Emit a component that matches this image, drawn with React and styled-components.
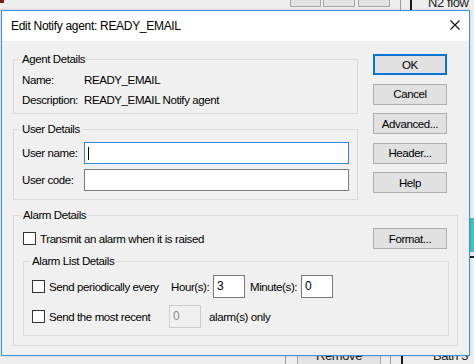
import styled, { createGlobalStyle } from "styled-components";

const GlobalStyle = createGlobalStyle`
  html, body {
    margin: 0;
    padding: 0;
  }
  body {
    background: #f0f0f0;
    font-family: "Liberation Sans", Arial, sans-serif;
    color: #000;
  }
`;

function App() {
  return (
    <Desktop>
      <GlobalStyle />
      <BackSquare />
      <BackButton $left={290} $width={31} />
      <BackButton $left={323} $width={32} />
      <BackButton $left={358} $width={32} />
      <BackLine $left={400} $color="#9a9a9a" />
      <BackLine $left={410} $color="#1a1a1a" $width={2} />
      <BackText $left={428} $top={-5}>N2 flow</BackText>
      <BackPatch />
      <BackDash />
      <BackLine $left={285} $top={356} $color="#9a9a9a" />
      <BackButton $left={297} $width={84} $top={346}>Remove</BackButton>
      <BackLine $left={390} $top={356} $color="#9a9a9a" />
      <BackLine $left={401} $top={356} $color="#1a1a1a" $width={2} />
      <BackText $left={433} $top={348}>Bath 3</BackText>

      <Dialog>
        <TitleBar>
          <Title>Edit Notify agent: READY_EMAIL</Title>
          <CloseIcon width="10" height="10" viewBox="0 0 10 10">
            <path d="M0.5 0.5 L9.5 9.5 M9.5 0.5 L0.5 9.5" stroke="#111" strokeWidth="1.1" />
          </CloseIcon>
        </TitleBar>

        <Body>
          <TopSection>
            <LeftCol>
              <Group $pad="4px 8px 3px">
                <Legend>Agent Details</Legend>
                <InfoRow>
                  <span>Name:</span>
                  <span>READY_EMAIL</span>
                </InfoRow>
                <InfoRow>
                  <span>Description:</span>
                  <span>READY_EMAIL Notify agent</span>
                </InfoRow>
              </Group>

              <Group $pad="6px 8px 8px">
                <Legend>User Details</Legend>
                <Fields>
                  <InfoRow $tall>
                    <span>User name:</span>
                    <TextBox $focused>
                      <Caret />
                    </TextBox>
                  </InfoRow>
                  <InfoRow $tall>
                    <span>User code:</span>
                    <TextBox />
                  </InfoRow>
                </Fields>
              </Group>
            </LeftCol>

            <ButtonCol>
              <Button $default>OK</Button>
              <Button>Cancel</Button>
              <Button>Advanced...</Button>
              <Button>Header...</Button>
              <Button>Help</Button>
            </ButtonCol>
          </TopSection>

          <Group $pad="6px 10px 9px 9px">
            <Legend>Alarm Details</Legend>
            <AlarmStack>
              <AlarmTop>
                <CheckLabel>
                  <Check />
                  Transmit an alarm when it is raised
                </CheckLabel>
                <Button>Format...</Button>
              </AlarmTop>

              <Group $pad="7px 8px 7px" $inner>
                <Legend>Alarm List Details</Legend>
                <ListRows>
                  <ListRow>
                    <CheckLabel $width={137}>
                      <Check />
                      Send periodically every
                    </CheckLabel>
                    <Caption $width={42} $gap={2}>Hour(s):</Caption>
                    <SmallBox>3</SmallBox>
                    <Caption $width={51} $gap={5}>Minute(s):</Caption>
                    <SmallBox>0</SmallBox>
                  </ListRow>
                  <ListRow>
                    <CheckLabel $width={137}>
                      <Check />
                      Send the most recent
                    </CheckLabel>
                    <SmallBox $disabled>0</SmallBox>
                    <Caption $gap={8}>alarm(s) only</Caption>
                  </ListRow>
                </ListRows>
              </Group>
            </AlarmStack>
          </Group>
        </Body>
      </Dialog>
    </Desktop>
  );
}

const Desktop = styled.div`
  position: relative;
  width: 474px;
  height: 364px;
  overflow: hidden;
  background: #eeeeee;
  font-size: 11.5px;
  letter-spacing: -0.4px;
`;

const BackSquare = styled.div`
  position: absolute;
  left: 0;
  top: 0;
  width: 4px;
  height: 3px;
  background: #7a1c1c;
`;

const BackButton = styled.div`
  position: absolute;
  left: ${(p) => p.$left}px;
  top: ${(p) => p.$top ?? -12}px;
  width: ${(p) => p.$width}px;
  height: 19px;
  box-sizing: border-box;
  border: 1px solid #a8a8a8;
  background: #e3e3e3;
  display: flex;
  justify-content: center;
  align-items: center;
  font-size: 13px;
  color: #222;
`;

const BackLine = styled.div`
  position: absolute;
  left: ${(p) => p.$left}px;
  top: ${(p) => p.$top ?? 0}px;
  width: ${(p) => p.$width ?? 1}px;
  height: 10px;
  background: ${(p) => p.$color};
`;

const BackText = styled.div`
  position: absolute;
  left: ${(p) => p.$left}px;
  top: ${(p) => p.$top}px;
  font-size: 13px;
  line-height: 16px;
  color: #222;
`;

const BackPatch = styled.div`
  position: absolute;
  left: 469px;
  top: 218px;
  width: 5px;
  height: 34px;
  background: #3fc4c6;
`;

const BackDash = styled.div`
  position: absolute;
  left: 469px;
  top: 256px;
  width: 5px;
  height: 2px;
  background: #222;
`;

const Dialog = styled.div`
  position: absolute;
  left: 1px;
  top: 10px;
  width: 469px;
  height: 346px;
  box-sizing: border-box;
  border: 1px solid #3a8fdf;
  background: #f0f0f0;
  display: flex;
  flex-direction: column;
  box-shadow: 0 0 3px rgba(0, 0, 0, 0.15);
`;

const TitleBar = styled.div`
  height: 29px;
  flex-shrink: 0;
  background: #fff;
  display: flex;
  align-items: center;
  justify-content: space-between;
  padding: 0 9px 1px 9px;
`;

const Title = styled.div`
  font-size: 12px;
  letter-spacing: -0.3px;
  color: #000;
`;

const CloseIcon = styled.svg`
  display: block;
  margin-bottom: 2px;
`;

const Body = styled.div`
  flex: 1;
  display: flex;
  flex-direction: column;
  gap: 8px;
  padding: 11px 11px 10px;
`;

const TopSection = styled.div`
  display: flex;
  align-items: flex-start;
  gap: 15px;
`;

const LeftCol = styled.div`
  width: 345px;
  display: flex;
  flex-direction: column;
  gap: 8px;
`;

const ButtonCol = styled.div`
  width: 74px;
  margin-top: 2px;
  display: flex;
  flex-direction: column;
  gap: 8.5px;
`;

const Group = styled.fieldset`
  margin: 0 ${(p) => (p.$inner ? "-2px" : "0")} 0 0;
  padding: ${(p) => p.$pad};
  min-width: 0;
  border: 1px solid #dcdcdc;
`;

const Legend = styled.legend`
  padding: 0 2px;
  margin-left: -2px;
  line-height: 14px;
  font-size: 11.5px;
`;

const InfoRow = styled.div`
  display: grid;
  grid-template-columns: 62px 1fr;
  align-items: center;
  height: ${(p) => (p.$tall ? 22 : 20)}px;
`;

const Fields = styled.div`
  display: flex;
  flex-direction: column;
  gap: 5px;
`;

const TextBox = styled.div`
  height: 22px;
  box-sizing: border-box;
  background: #fff;
  border: 1px solid ${(p) => (p.$focused ? "#2f86d8" : "#7a7a7a")};
  display: flex;
  align-items: center;
  padding-left: 3px;
`;

const Caret = styled.span`
  width: 1px;
  height: 13px;
  background: #000;
`;

const Button = styled.div`
  height: 21px;
  width: 74px;
  box-sizing: border-box;
  display: flex;
  justify-content: center;
  align-items: center;
  background: #e1e1e1;
  border: 1px solid ${(p) => (p.$default ? "#0a74d4" : "#adadad")};
  box-shadow: ${(p) => (p.$default ? "inset 0 0 0 1px #0a74d4" : "none")};
  font-size: 11.5px;
`;

const AlarmStack = styled.div`
  display: flex;
  flex-direction: column;
  gap: 5px;
`;

const AlarmTop = styled.div`
  height: 21px;
  display: flex;
  align-items: center;
  justify-content: space-between;
`;

const CheckLabel = styled.label`
  display: flex;
  align-items: center;
  gap: 4px;
  width: ${(p) => (p.$width ? `${p.$width}px` : "auto")};
  flex-shrink: 0;
  white-space: nowrap;
`;

const Check = styled.span`
  width: 13px;
  height: 13px;
  box-sizing: border-box;
  border: 1px solid #333;
  background: #fff;
  flex-shrink: 0;
`;

const ListRows = styled.div`
  display: flex;
  flex-direction: column;
  gap: 7px;
`;

const ListRow = styled.div`
  height: 23px;
  display: flex;
  align-items: center;
`;

const Caption = styled.span`
  margin-left: ${(p) => p.$gap}px;
  width: ${(p) => (p.$width ? `${p.$width}px` : "auto")};
  white-space: nowrap;
`;

const SmallBox = styled.div`
  width: 32px;
  height: 23px;
  box-sizing: border-box;
  border: 1px solid ${(p) => (p.$disabled ? "#cccccc" : "#7a7a7a")};
  background: ${(p) => (p.$disabled ? "#f0f0f0" : "#fff")};
  color: ${(p) => (p.$disabled ? "#8a8a8a" : "#000")};
  padding: 2px 0 0 3px;
  font-size: 12px;
  line-height: 16px;
`;

export default App;
